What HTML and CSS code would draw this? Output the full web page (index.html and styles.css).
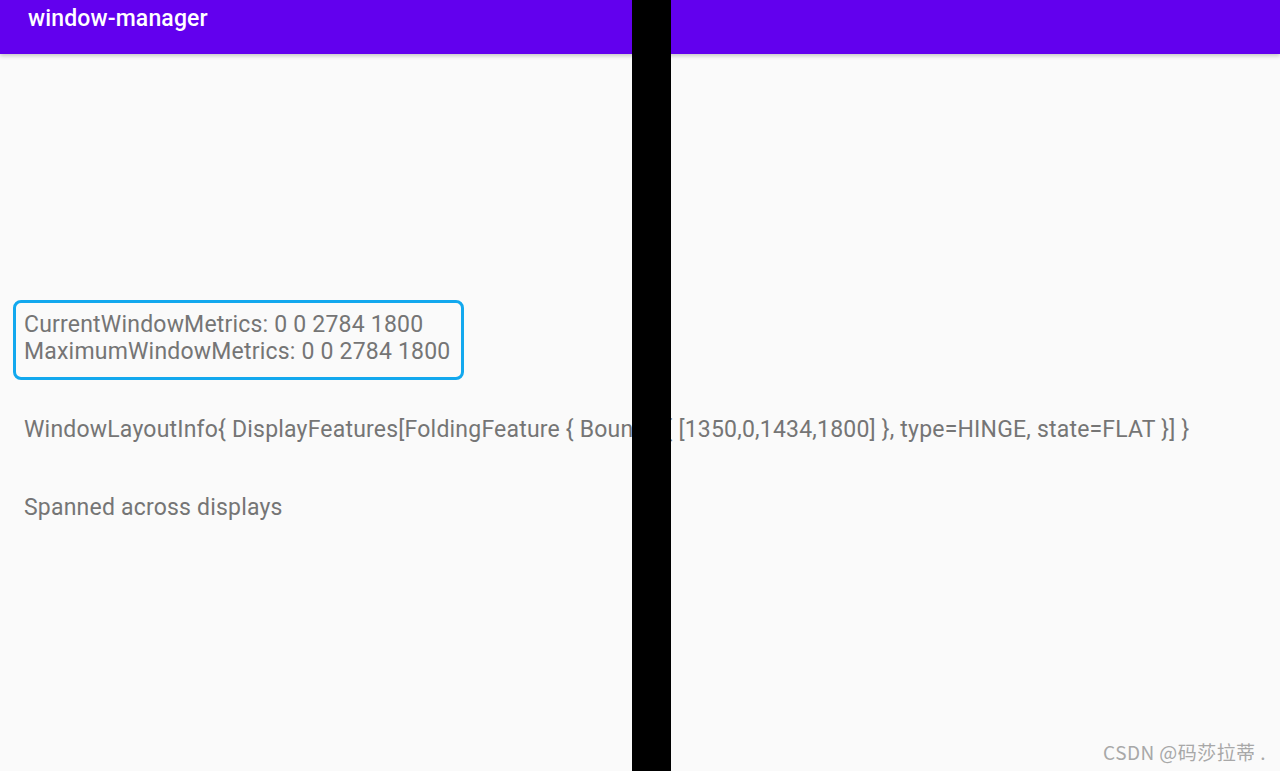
FILE: index.html
```html
<!DOCTYPE html>
<html lang="en">
<head>
  <meta charset="UTF-8" />
  <meta name="viewport" content="width=device-width, initial-scale=1.0"/>
  <title>window-manager</title>
  <link rel="stylesheet" href="styles.css">
</head>
<body>

<header class="app-bar">
  <h1 class="app-title">window-manager</h1>
</header>

<main class="content">
  <div class="metrics-box">
    <p class="info-text">CurrentWindowMetrics: 0 0 2784 1800</p>
    <p class="info-text">MaximumWindowMetrics: 0 0 2784 1800</p>
  </div>

  <p class="info-text layout-info">WindowLayoutInfo{ DisplayFeatures[FoldingFeature { Bounds { [1350,0,1434,1800] }, type=HINGE, state=FLAT }] }</p>

  <p class="info-text span-info">Spanned across displays</p>
</main>

<div class="hinge"></div>

<div class="watermark">CSDN @码莎拉蒂 .</div>

</body>
</html>
```

FILE: styles.css
```css
body {
  font-family: Roboto, "Noto Sans CJK SC", sans-serif;
  background-color: #fafafa;
  margin: 0;
  height: 771px;
  overflow: hidden;
  position: relative;
}

.app-bar {
  height: 54px;
  background-color: #6200ee;
  box-shadow: 0 2px 4px rgba(0,0,0,0.2);
  padding-left: 28px;
}

.app-title {
  margin: 0;
  color: #fff;
  font-size: 23px;
  font-weight: 500;
  line-height: 38px;
  letter-spacing: 0.15px;
}

.content {
  padding-top: 246px;
  padding-left: 13px;
}

.info-text {
  margin: 0;
  color: #757575;
  font-size: 23px;
  line-height: 27px;
  letter-spacing: 0.2px;
  white-space: nowrap;
}

.metrics-box {
  display: inline-block;
  border: 3px solid #12a8ee;
  border-radius: 8px;
  padding: 8px 11px 12px 8px;
}

.layout-info {
  margin-top: 36px;
  margin-left: 11px;
}

.span-info {
  margin-top: 51px;
  margin-left: 11px;
}

.hinge {
  position: absolute;
  top: 0;
  bottom: 0;
  left: 632px;
  width: 39px;
  background-color: #000;
}

.watermark {
  position: absolute;
  right: 14px;
  bottom: 6px;
  color: #a8a8a8;
  font-size: 19px;
  letter-spacing: 0.45px;
  font-family: "Noto Sans CJK SC", sans-serif;
}
```
